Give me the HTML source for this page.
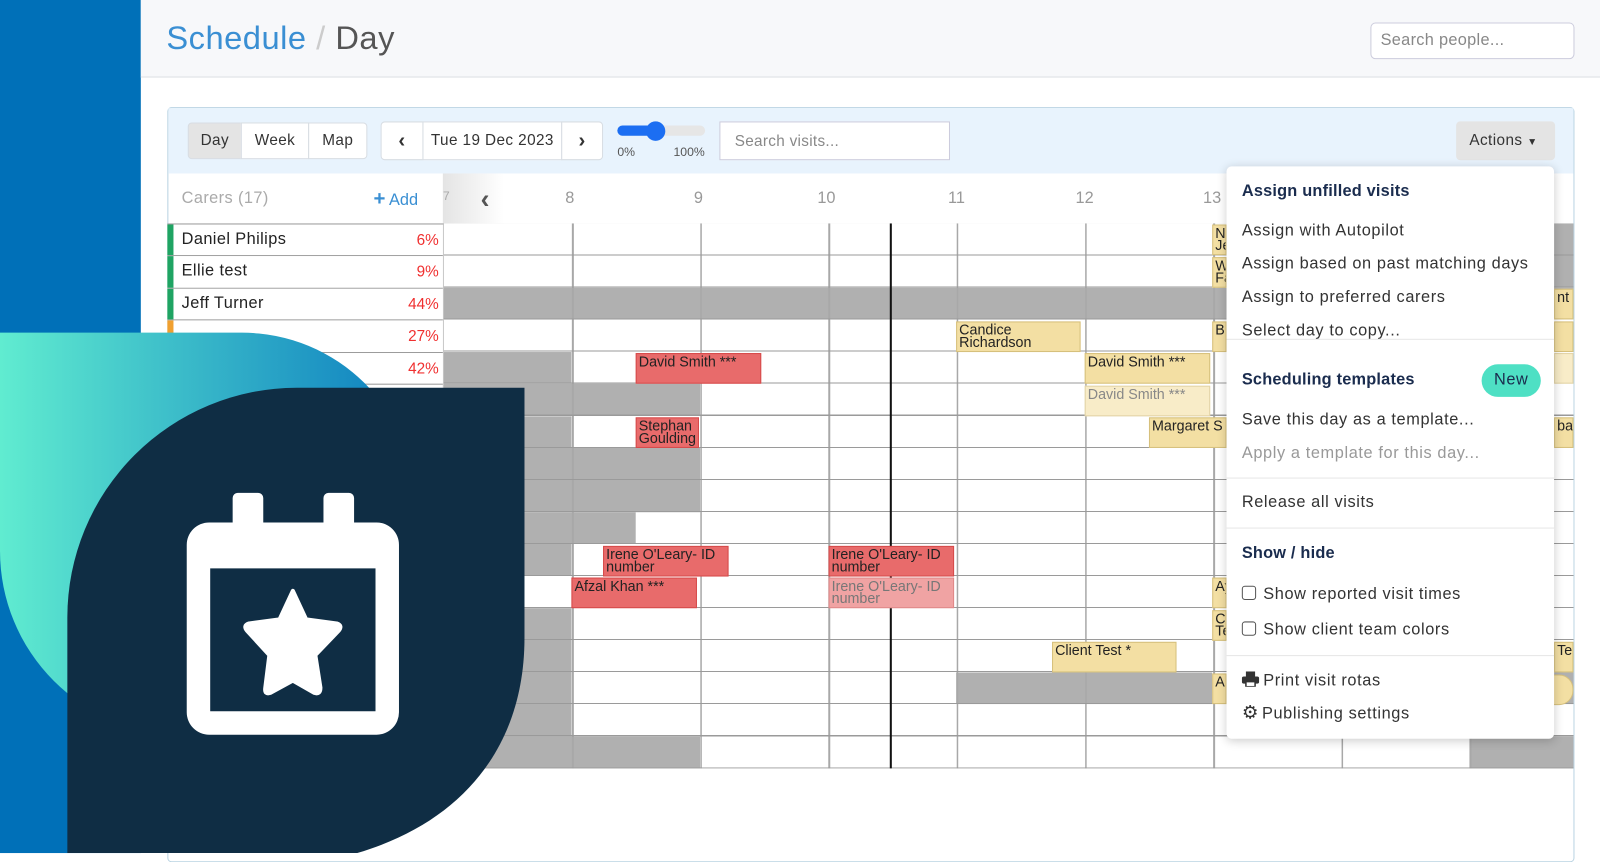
<!DOCTYPE html>
<html><head><meta charset="utf-8"><style>
*{box-sizing:border-box;margin:0;padding:0}
body{width:1600px;height:836px;overflow:hidden;background:#fff;font-family:"Liberation Sans",sans-serif;position:relative;color:#333}
#w{position:absolute;left:0;top:0;width:1568px;height:820px;transform:scale(1.0204);transform-origin:0 0}
.a{position:absolute}
.hdr{left:138px;top:0;width:1462px;height:76px;background:#f7f8fa;border-bottom:1px solid #dcdfe3}
.btn{position:absolute;top:0;height:36px;line-height:34px;text-align:center;font-size:15px;color:#333;background:#fff;border:1px solid #d8dde3;letter-spacing:.4px}
.row{position:absolute;left:0;width:270px;height:31.4px;border-bottom:1px solid #999;background:#fff}
.row .bar{position:absolute;left:0;top:0;width:6px;height:100%;background:#1fa463}
.row .n{position:absolute;left:14px;top:6px;font-size:16px;color:#222;letter-spacing:.4px}
.row .p{position:absolute;right:4px;top:7px;font-size:15px;color:#f03030}
.g{position:absolute;background:#b0b0b0}
.v{position:absolute;font-size:14px;line-height:12px;color:#222;padding:1px 2px;overflow:hidden;white-space:nowrap;height:30px}
.r{background:#e86b6b;border:1px solid #d64a4a}
.lr{background:#f0a3a3;border:1px solid #e08888;color:#777}
.y{background:#f3dfa3;border:1px solid #d6c07c}
.ly{background:#f8ecc8;border:1px solid #e2d3a6;color:#888}
.dd{left:1202px;top:163px;width:321px;height:561px;background:#fff;border-radius:5px;box-shadow:0 2px 10px rgba(0,0,0,.2);font-size:16px;color:#333;letter-spacing:.6px}
.dd div{position:absolute;left:15px;white-space:nowrap}
.dd .b{font-weight:bold;color:#1a2c4e;letter-spacing:.2px}
.dd hr{position:absolute;left:0;width:321px;border:0;border-top:1px solid #e6e6e6}
.cb{display:inline-block;width:14px;height:14px;border:1px solid #555;border-radius:3px;vertical-align:-1px;margin-right:7px}
</style></head><body><div id="w">
<div class="a" style="left:0;top:0;width:138px;height:836px;background:#0070b8"></div>
<div class="a hdr"></div>
<div class="a" style="left:163px;top:19px;font-size:32px;color:#3a8fd3;letter-spacing:.5px">Schedule<span style="color:#ccc"> / </span><span style="color:#555">Day</span></div>
<div class="a" style="left:1343px;top:22px;width:200px;height:36px;border:1px solid #ccd;border-radius:5px;background:#fff;font-size:16px;color:#888;padding:8px 9px;letter-spacing:.3px">Search people...</div>

<div class="a" style="left:164px;top:105px;width:1379px;height:740px;border:1px solid #b9d3e2;border-radius:4px;background:#fff"></div>
<div class="a" style="left:165px;top:106px;width:1377px;height:64px;background:#e8f3fd"></div>
<div class="a" style="left:184px;top:120px;width:176px;height:36px">
<div class="btn" style="left:0;width:53px;background:#e4e4e4;border-radius:4px 0 0 4px">Day</div>
<div class="btn" style="left:52px;width:67px">Week</div>
<div class="btn" style="left:118px;width:58px;border-radius:0 4px 4px 0">Map</div></div>
<div class="a" style="left:373px;top:119px;width:218px;height:38px">
<div class="btn" style="left:0;width:42px;height:38px;line-height:36px;font-size:20px;font-weight:bold;border-radius:4px 0 0 4px">‹</div>
<div class="btn" style="left:41px;width:137px;height:38px;line-height:36px">Tue 19 Dec 2023</div>
<div class="btn" style="left:177px;width:41px;height:38px;line-height:36px;font-size:20px;font-weight:bold;border-radius:0 4px 4px 0">›</div></div>
<div class="a" style="left:605px;top:123px;width:86px;height:10px;border-radius:5px;background:#e6e6e6"></div>
<div class="a" style="left:605px;top:123px;width:40px;height:10px;border-radius:5px;background:#1c6ef2"></div>
<div class="a" style="left:633px;top:119px;width:19px;height:19px;border-radius:50%;background:#1c6ef2"></div>
<div class="a" style="left:605px;top:142px;font-size:12px;color:#555">0%</div>
<div class="a" style="left:660px;top:142px;font-size:12px;color:#555">100%</div>
<div class="a" style="left:705px;top:119px;width:226px;height:38px;border:1px solid #ccd;background:#fff;font-size:15px;color:#888;padding:10px 14px;letter-spacing:.3px">Search visits...</div>
<div class="a" style="left:1427px;top:119px;width:97px;height:38px;background:#e4e4e4;border-radius:4px;font-size:15px;color:#333;padding:10px 13px;letter-spacing:.4px">Actions <span style="font-size:10px">▼</span></div>

<div class="a" style="left:178px;top:186px;font-size:16px;color:#aaa;letter-spacing:.4px">Carers (17)</div>
<div class="a" style="left:366px;top:184px;font-size:16px;color:#3a8fd3"><b style="font-size:20px">+</b> Add</div>
<div class="a" style="left:434px;top:170px;width:60px;height:49px;background:linear-gradient(90deg,#e4e4e4,#fff)"></div>
<div class="a" style="left:434px;top:185px;font-size:12px;color:#aaa">7</div>
<div class="a" style="left:471px;top:180px;font-size:26px;font-weight:bold;color:#555">‹</div>
<div class="a" style="left:554px;top:186px;font-size:16px;color:#999">8</div>
<div class="a" style="left:680px;top:186px;font-size:16px;color:#999">9</div>
<div class="a" style="left:801px;top:186px;font-size:16px;color:#999">10</div>
<div class="a" style="left:929px;top:186px;font-size:16px;color:#999">11</div>
<div class="a" style="left:1054px;top:186px;font-size:16px;color:#999">12</div>
<div class="a" style="left:1179px;top:186px;font-size:16px;color:#999">13</div>

<div class="a" style="left:164px;top:219px;width:271px;height:534px;border-right:1px solid #bbb;border-top:1px solid #999">
<div class="row" style="top:0"><span class="bar"></span><span class="n">Daniel Philips</span><span class="p">6%</span></div>
<div class="row" style="top:31.4px"><span class="bar"></span><span class="n">Ellie test</span><span class="p">9%</span></div>
<div class="row" style="top:62.8px"><span class="bar"></span><span class="n">Jeff Turner</span><span class="p">44%</span></div>
<div class="row" style="top:94.2px"><span class="bar" style="background:#f0a030"></span><span class="p">27%</span></div>
<div class="row" style="top:125.6px"><span class="bar"></span><span class="p">42%</span></div>
</div>

<div class="a" style="left:435px;top:219px;width:1107px;height:534px;background:#fff">
<div class="g" style="left:0;top:63px;width:1107px;height:31px"></div>
<div class="g" style="left:0;top:126px;width:125px;height:31px"></div>
<div class="g" style="left:0;top:157px;width:251px;height:31px"></div>
<div class="g" style="left:0;top:189px;width:125px;height:31px"></div>
<div class="g" style="left:0;top:220px;width:251px;height:63px"></div>
<div class="g" style="left:0;top:283px;width:188px;height:31px"></div>
<div class="g" style="left:0;top:314px;width:125px;height:31px"></div>
<div class="g" style="left:0;top:377px;width:125px;height:126px"></div>
<div class="g" style="left:502px;top:440px;width:251px;height:31px"></div>
<div class="g" style="left:1088px;top:0;width:19px;height:63px"></div>
<div class="g" style="left:1088px;top:440px;width:19px;height:31px"></div>
<div class="g" style="left:0;top:503px;width:251px;height:31px"></div>
<div class="g" style="left:1005px;top:503px;width:102px;height:31px"></div>
<div class="a" style="left:0;top:0;width:1107px;height:534px;background-image:repeating-linear-gradient(180deg,transparent 0,transparent 30.4px,#9a9a9a 30.4px,#9a9a9a 31.41px),repeating-linear-gradient(90deg,transparent 0,transparent 124px,#a8a8a8 124px,#a8a8a8 125.7px);background-position:0 0,1.5px 0"></div>
<div class="a" style="left:437px;top:0;width:2px;height:534px;background:#111"></div>
</div>
<div class="a v y" style="left:1188px;top:220px;width:14px">N<br>Je</div>
<div class="a v y" style="left:1188px;top:252px;width:14px">W<br>Fa</div>
<div class="a v y" style="left:1523px;top:283px;width:19px">nt</div>
<div class="a v y" style="left:937px;top:315px;width:122px">Candice<br>Richardson</div>
<div class="a v y" style="left:1188px;top:315px;width:14px">B</div>
<div class="a v y" style="left:1523px;top:315px;width:19px"></div>
<div class="a v r" style="left:623px;top:346px;width:123px">David Smith ***</div>
<div class="a v y" style="left:1063px;top:346px;width:123px">David Smith ***</div>
<div class="a v ly" style="left:1523px;top:346px;width:19px"></div>
<div class="a v ly" style="left:1063px;top:378px;width:123px">David Smith ***</div>
<div class="a v r" style="left:623px;top:409px;width:62px">Stephan<br>Goulding</div>
<div class="a v y" style="left:1126px;top:409px;width:76px">Margaret S</div>
<div class="a v y" style="left:1523px;top:409px;width:19px">ba</div>
<div class="a v r" style="left:591px;top:535px;width:123px">Irene O'Leary- ID<br>number</div>
<div class="a v r" style="left:812px;top:535px;width:123px">Irene O'Leary- ID<br>number</div>
<div class="a v r" style="left:560px;top:566px;width:123px">Afzal Khan ***</div>
<div class="a v lr" style="left:812px;top:566px;width:123px">Irene O'Leary- ID<br>number</div>
<div class="a v y" style="left:1188px;top:566px;width:14px">Ay</div>
<div class="a v y" style="left:1188px;top:598px;width:14px">Cl<br>Te</div>
<div class="a v y" style="left:1031px;top:629px;width:122px">Client Test *</div>
<div class="a v y" style="left:1523px;top:629px;width:19px">Test</div>
<div class="a v y" style="left:1188px;top:660px;width:14px">Al</div>
<div class="a v y" style="left:1520px;top:661px;width:22px;border-radius:0 14px 14px 0"></div>

<div class="a dd">
<div class="b" style="top:16px">Assign unfilled visits</div>
<div style="top:55px">Assign with Autopilot</div>
<div style="top:87px">Assign based on past matching days</div>
<div style="top:120px">Assign to preferred carers</div>
<div style="top:153px">Select day to copy...</div>
<hr style="top:169px">
<div class="b" style="top:201px">Scheduling templates</div>
<div style="left:250px;top:194px;width:58px;height:32px;border-radius:16px;background:#4ee0c4;color:#1a2c4e;text-align:center;line-height:32px;font-size:16px">New</div>
<div style="top:240px">Save this day as a template...</div>
<div style="top:273px;color:#999">Apply a template for this day...</div>
<hr style="top:305px">
<div style="top:321px">Release all visits</div>
<hr style="top:354px">
<div class="b" style="top:371px">Show / hide</div>
<div style="top:411px"><span class="cb"></span>Show reported visit times</div>
<div style="top:446px"><span class="cb"></span>Show client team colors</div>
<hr style="top:479px">
<div style="top:495px"><svg width="17" height="15" viewBox="0 0 17 15" style="vertical-align:-1px;margin-right:4px"><rect x="4" y="0" width="9" height="5" fill="#333"/><rect x="0" y="5" width="17" height="7" rx="2" fill="#333"/><rect x="4" y="10" width="9" height="5" fill="#fff" stroke="#333" stroke-width="1.5"/></svg>Print visit rotas</div>
<div style="top:528px"><span style="font-size:18px;line-height:14px;margin-right:3px">⚙</span>Publishing settings</div>
</div>

<svg class="a" style="left:0;top:0" width="1600" height="836" viewBox="0 0 1600 836">
<defs><linearGradient id="tg" x1="0" x2="1" y1="0" y2="0"><stop offset="0" stop-color="#60ecd0"/><stop offset="1" stop-color="#0b7cc0"/></linearGradient></defs>
<path d="M0,326 H237 A171,171 0 0 1 408,497 V720 H180 A180,180 0 0 1 0,540 Z" fill="url(#tg)"/>
<path d="M66,836 V605 A225,225 0 0 1 291,380 H514 V625 C514,730 455,805 350,836 Z" fill="#0f2d44"/>
<g fill="#fff">
<rect x="228" y="483" width="30" height="40" rx="5"/>
<rect x="317" y="483" width="30" height="40" rx="5"/>
<path fill-rule="evenodd" d="M205,512 H369 A22,22 0 0 1 391,534 V698 A22,22 0 0 1 369,720 H205 A22,22 0 0 1 183,698 V534 A22,22 0 0 1 205,512 Z M206,557 V697 H368 V557 Z"/>
<path d="M287,579 L300,607 L330,611 Q336,613 332,618 L309,642 L314,674 Q314,681 308,679 L287,667 L265,679 Q259,681 260,674 L264,642 L242,618 Q238,613 244,611 L274,607 Z" stroke="#fff" stroke-width="4" stroke-linejoin="round"/>
</g>
</svg>
</div></body></html>
